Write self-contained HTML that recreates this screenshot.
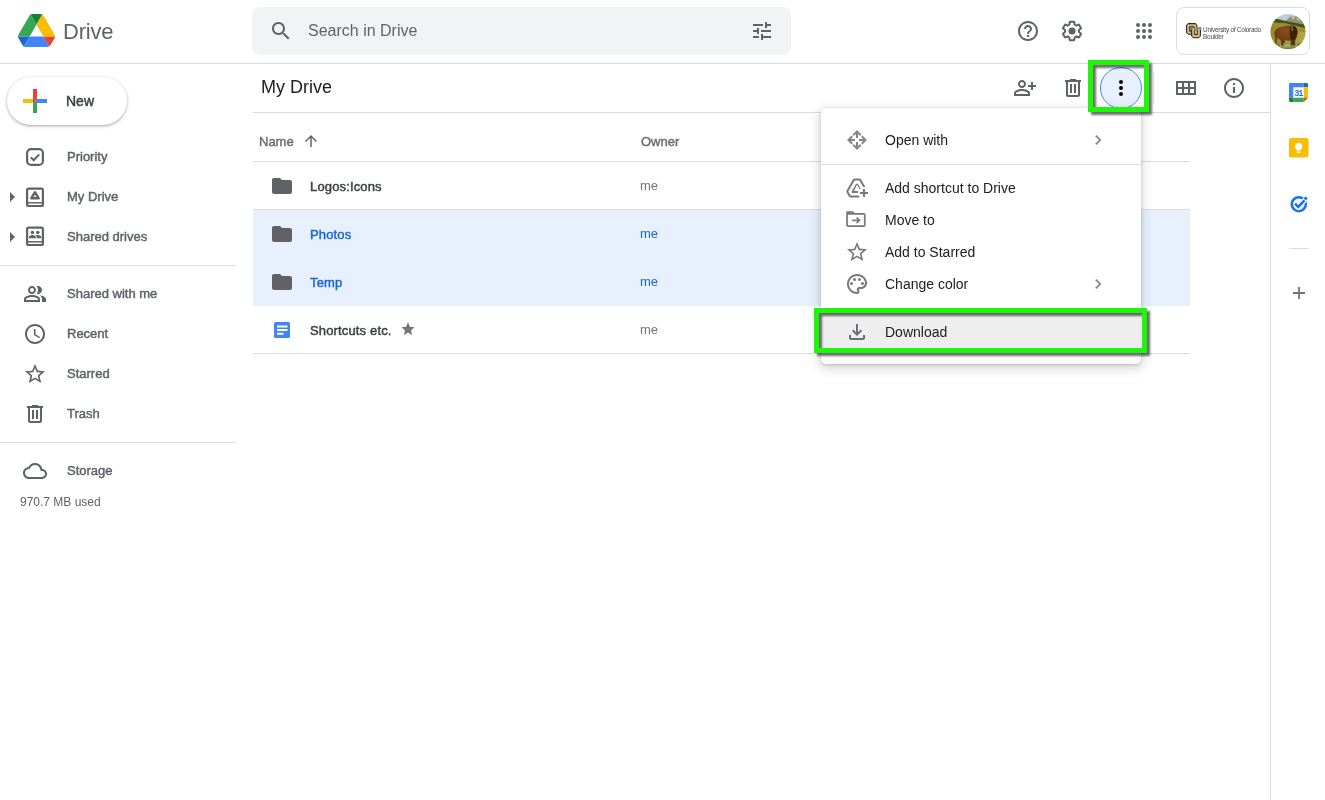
<!DOCTYPE html>
<html lang="en">
<head>
<meta charset="utf-8">
<title>My Drive - Google Drive</title>
<style>
*{box-sizing:border-box;margin:0;padding:0}
html,body{width:1325px;height:800px;overflow:hidden;background:#fff}
body{position:relative;font-family:"Liberation Sans",Arial,sans-serif;color:#202124;-webkit-font-smoothing:antialiased}
#wrap{position:absolute;left:0;top:0;width:1325px;height:800px;will-change:transform}
.abs{position:absolute}
svg{display:block;overflow:visible}
.t{position:absolute;white-space:nowrap;line-height:1}
/* header */
#hdr-line{left:0;top:63px;width:1325px;height:1px;background:#dadce0}
#logo{left:17.500px;top:14px}
#drive-word{left:63px;top:21px;font-size:22px;color:#5f6368;letter-spacing:-0.2px}
#search{left:252px;top:7px;width:539px;height:48px;background:#f1f3f4;border-radius:8px}
#search-text{left:308px;top:23px;font-size:16px;color:#5f6368}
#acct{left:1176px;top:7px;width:134px;height:48px;border:1px solid #dadce0;border-radius:8px;background:#fff}
/* sidebar */
#newbtn{left:7px;top:77px;width:120px;height:48px;border-radius:24px;background:#fff;box-shadow:0 1px 2px 0 rgba(60,64,67,.30),0 1px 3px 1px rgba(60,64,67,.15)}
#new-text{left:66px;top:94px;font-size:14px;-webkit-text-stroke:0.45px;color:#3c4043}
.nav{position:absolute;left:67px;font-size:13px;-webkit-text-stroke:0.45px #5f6368;color:#5f6368;white-space:nowrap;line-height:1}
.navi{position:absolute;left:23px;width:24px;height:24px}
.tri{position:absolute;left:10px;width:0;height:0;border-left:5px solid #5f6368;border-top:5px solid transparent;border-bottom:5px solid transparent}
.sdiv{position:absolute;left:0;width:236px;height:1px;background:#dadce0}
/* main */
.hline{position:absolute;height:1px;background:#dadce0}
.row{position:absolute;left:253px;width:937px;height:48px}
.row.sel{background:#e8f0fe}
.fname{position:absolute;left:310px;font-size:13px;letter-spacing:0.15px;-webkit-text-stroke:0.45px;color:#3c4043;white-space:nowrap;line-height:1}
.owner{position:absolute;left:640px;font-size:13px;color:#737373;white-space:nowrap;line-height:1}
.blue{color:#1967d2}
/* menu */
#menu{left:821px;top:108px;width:320px;height:256px;background:#fff;border-radius:5px;box-shadow:0 3px 10px 3px rgba(60,64,67,.17),0 1px 3px 0 rgba(60,64,67,.22)}
.mi{position:absolute;left:885px;font-size:14px;color:#202124;white-space:nowrap;line-height:1}
.mico{position:absolute;left:845px;width:24px;height:24px}
.green{position:absolute;border:5px solid #1ef709;filter:drop-shadow(3px 3px 1.2px rgba(55,50,60,.72))}
</style>
</head>
<body>
<div id="wrap">

<!-- ===== header ===== -->
<div class="abs" id="hdr-line"></div>
<div class="abs" id="logo">
<svg width="37" height="33" viewBox="0 0 87.3 78">
<path d="m6.6 66.85 3.85 6.65c.8 1.4 1.95 2.5 3.3 3.3l13.75-23.8h-27.5c0 1.55.4 3.1 1.2 4.500z" fill="#1967d2"/>
<path d="m43.650 25-13.750-23.800c-1.350.800-2.500 1.900-3.300 3.300l-25.400 44a9.060 9.060 0 0 0 -1.200 4.500h27.500z" fill="#34a853"/>
<path d="m73.550 76.800c1.350-.800 2.500-1.900 3.300-3.300l1.600-2.750 7.650-13.250c.800-1.400 1.200-2.950 1.200-4.500h-27.502l5.852 11.500z" fill="#ea4335"/>
<path d="m43.650 25 13.750-23.800c-1.350-.800-2.900-1.200-4.500-1.200h-18.500c-1.600 0-3.150.450-4.500 1.200z" fill="#188038"/>
<path d="m59.800 53h-32.300l-13.750 23.800c1.350.800 2.900 1.200 4.500 1.200h50.800c1.600 0 3.150-.450 4.500-1.200z" fill="#4285f4"/>
<path d="m73.400 26.500-12.700-22c-.800-1.400-1.950-2.500-3.300-3.300l-13.750 23.800 16.150 28h27.450c0-1.550-.400-3.100-1.200-4.500z" fill="#fbbc04"/>
</svg>
</div>
<div class="t" id="drive-word">Drive</div>

<div class="abs" id="search"></div>
<div class="t" id="search-text">Search in Drive</div>


<!-- search icons -->
<svg class="abs" style="left:269px;top:19px" width="24" height="24" viewBox="0 0 24 24" fill="#5f6368"><path d="M15.5 14h-.79l-.28-.27C15.410 12.590 16 11.110 16 9.500 16 5.910 13.090 3 9.500 3S3 5.910 3 9.500 5.910 16 9.500 16c1.610 0 3.090-.59 4.230-1.570l.27.28v.79l5 4.990L20.490 19l-4.990-5zm-6 0C7.010 14 5 11.990 5 9.500S7.010 5 9.500 5 14 7.010 14 9.500 11.990 14 9.500 14z"/></svg>
<svg class="abs" style="left:750px;top:19px" width="24" height="24" viewBox="0 0 24 24" fill="#5f6368"><path d="M3 17v2h6v-2H3zM3 5v2h10V5H3zm10 16v-2h8v-2h-8v-2h-2v6h2zM7 9v2H3v2h4v2h2V9H7zm14 4v-2H11v2h10zm-6-4h2V7h4V5h-4V3h-2v6z"/></svg>
<!-- help / settings / apps -->
<svg class="abs" style="left:1016px;top:19px" width="24" height="24" viewBox="0 0 24 24" fill="#5f6368"><path d="M11 18h2v-2h-2v2zm1-16C6.480 2 2 6.480 2 12s4.480 10 10 10 10-4.480 10-10S17.520 2 12 2zm0 18c-4.410 0-8-3.590-8-8s3.590-8 8-8 8 3.590 8 8-3.590 8-8 8zm0-14c-2.210 0-4 1.790-4 4h2c0-1.100.9-2 2-2s2 .9 2 2c0 2-3 1.750-3 5h2c0-2.250 3-2.500 3-5 0-2.210-1.790-4-4-4z"/></svg>
<svg class="abs" style="left:1060px;top:19px" width="24" height="24" viewBox="0 0 24 24" fill="#5f6368"><path d="M13.850 22.250h-3.700c-.74 0-1.360-.54-1.450-1.270l-.27-1.890c-.27-.14-.53-.29-.79-.46l-1.800.72c-.7.260-1.470-.03-1.810-.65L2.200 15.530c-.35-.66-.2-1.440.36-1.880l1.530-1.190c-.01-.15-.02-.3-.02-.46 0-.15.010-.31.020-.46l-1.520-1.190c-.59-.45-.74-1.260-.37-1.880l1.850-3.190c.34-.62 1.110-.9 1.790-.63l1.810.73c.26-.17.52-.32.78-.46l.27-1.910c.09-.7.710-1.250 1.440-1.250h3.700c.74 0 1.360.54 1.450 1.270l.27 1.890c.27.140.53.290.79.460l1.800-.72c.71-.26 1.480.03 1.820.65l1.840 3.180c.36.660.2 1.440-.36 1.880l-1.520 1.190c.01.150.02.300.02.460s-.01.310-.02.460l1.520 1.190c.56.450.72 1.230.37 1.860l-1.860 3.220c-.34.620-1.110.9-1.800.63l-1.800-.72c-.26.170-.52.320-.78.460l-.27 1.910c-.1.680-.72 1.220-1.460 1.220zm-3.230-2h2.760l.37-2.550.53-.22c.44-.18.880-.44 1.340-.78l.45-.34 2.380.96 1.380-2.400-2.030-1.580.07-.56c.03-.26.060-.51.060-.78s-.03-.53-.06-.78l-.07-.56 2.030-1.580-1.390-2.400-2.390.96-.45-.35c-.42-.32-.87-.58-1.330-.77l-.52-.22-.37-2.550h-2.760l-.37 2.550-.53.210c-.44.190-.88.440-1.340.79l-.45.330-2.380-.95-1.390 2.390 2.030 1.580-.07.560a7 7 0 0 0-.06.790c0 .26.020.53.060.78l.07.56-2.030 1.580 1.380 2.400 2.390-.96.450.35c.43.330.86.580 1.330.77l.53.220.38 2.550z"/><circle cx="12" cy="12" r="3.500"/></svg>
<svg class="abs" style="left:1132px;top:19px" width="24" height="24" viewBox="0 0 24 24" fill="#5f6368"><circle cx="6" cy="6" r="2"/><circle cx="12" cy="6" r="2"/><circle cx="18" cy="6" r="2"/><circle cx="6" cy="12" r="2"/><circle cx="12" cy="12" r="2"/><circle cx="18" cy="12" r="2"/><circle cx="6" cy="18" r="2"/><circle cx="12" cy="18" r="2"/><circle cx="18" cy="18" r="2"/></svg>
<div class="abs" id="acct"></div>
<!-- CU logo -->
<svg class="abs" style="left:1184.500px;top:21.500px" width="17" height="17" viewBox="0 0 32 32" fill="none" stroke-linejoin="bevel">
<path d="M19.500 10V6H6v14h8" stroke="#2a2723" stroke-width="8"/>
<path d="M19.500 10V6H6v14h8" stroke="#cfb87c" stroke-width="4"/>
<path d="M10.500 13.500h9M21.500 13.500h9" stroke="#2a2723" stroke-width="6"/>
<path d="M15.500 12v14.500H26V12" stroke="#2a2723" stroke-width="8"/>
<path d="M15.500 12v14.500H26V12" stroke="#cfb87c" stroke-width="4"/>
<path d="M11.500 13.500h8M22 13.500h8" stroke="#cfb87c" stroke-width="2.500"/>
</svg>
<div class="t" style="left:1203px;top:27px;font-size:6.400px;line-height:6.500px;color:#4a4a4a;white-space:normal;width:70px;letter-spacing:-0.22px">University of Colorado<br>Boulder</div>
<!-- avatar -->
<svg class="abs" style="left:1270px;top:14px" width="36" height="36" viewBox="0 0 36 36">
<defs><clipPath id="avc"><circle cx="18" cy="17.700" r="17.600"/></clipPath>
<filter id="avb" x="-10%" y="-10%" width="120%" height="120%"><feGaussianBlur stdDeviation="0.55"/></filter>
<radialGradient id="buf" cx="0.5" cy="0.3" r="0.75"><stop offset="0" stop-color="#8d4f1a"/><stop offset="0.6" stop-color="#6e3f17"/><stop offset="1" stop-color="#4e2d12"/></radialGradient>
<linearGradient id="fld" x1="0" y1="0" x2="1" y2="0.3"><stop offset="0" stop-color="#8a7a24"/><stop offset="0.5" stop-color="#a8952f"/><stop offset="1" stop-color="#b3a646"/></linearGradient>
</defs>
<g clip-path="url(#avc)"><g filter="url(#avb)">
<rect x="-2" y="-2" width="40" height="40" fill="url(#fld)"/>
<path d="M-2 -2h40v9H-2z" fill="#c3cbdb"/>
<path d="M16 7l3-3.500 3-1.500 3 .500 3-1 4 3 6 6v4L14 9z" fill="#8f9270"/>
<path d="M21 3l2.500-1 1.500 1.500-2.500 2zM26 3.500l3 1.500 1 2-2.500-1z" fill="#c9c3a8"/>
<path d="M-2 4.500l10 .500 10 2.500 18 3.500v3.500L16 9.500-2 8z" fill="#3f5220"/>
<path d="M-2 8l18 1.500 20 5v4L-2 13z" fill="#9a8c2c"/>
<path d="M-2 29c6-2 12-1 18 0s12-1.500 22-1V38H-2z" fill="#7f8a3c"/>
<path d="M4.500 20c-.2-3.500 2.500-6 6.500-7 3.500-.9 6-1 9-1.500 2.500-.4 5 .5 6.500 2.500 1.500 2.200 1.300 5 .5 7.500-.6 2-1.500 3.500-1.800 5.500l-.7 4h-3.500l-.5-4.500c-2 .4-4 .2-5.500-.3l-.8 4.500h-3l-.7-5c-1.200-.300-2.500-1-3.500-2l-.5 5.500H5.500l-.3-6c-.5-1-.6-2-.7-3.200z" fill="url(#buf)"/>
<path d="M20.500 12.500c1.500-1 3.500-1 5 .3 1.800 1.600 2.300 4.500 1.700 7.500-.5 2.600-1.700 5.500-3.500 6.200-2 .7-3.300-1.500-3.800-4.500-.5-3-.3-7 .6-9.500z" fill="#3a2311"/>
<path d="M27.200 14.200c.8.200 1.300 1 1 2M21.200 14c.3-.8 1-1.200 1.800-1" stroke="#b9a66a" stroke-width=".9" fill="none"/>
<circle cx="22.300" cy="15.500" r=".9" fill="#a89a3a"/>
<ellipse cx="17.500" cy="31.500" rx="3" ry="1.800" fill="#9dab74"/>
<path d="M10 28l1 6M14 29l.5 5M27 27l-1 7M30 26l.5 6" stroke="#a5a555" stroke-width="1"/>
</g></g>
</svg>

<!-- ===== sidebar ===== -->
<div class="abs" id="newbtn"></div>
<div class="t" id="new-text">New</div>


<!-- new plus -->
<svg class="abs" style="left:17px;top:83px" width="36" height="36" viewBox="0 0 36 36"><path fill="#34A853" d="M16 16v14h4V20z"/><path fill="#4285F4" d="M30 16H20l-4 4h14z"/><path fill="#FBBC05" d="M6 16v4h10l4-4z"/><path fill="#EA4335" d="M20 16V6h-4v14z"/></svg>
<!-- nav icons -->
<svg class="navi" style="top:145px" viewBox="0 0 24 24" fill="none" stroke="#5f6368" stroke-width="2.200"><rect x="4.100" y="4.100" width="15.800" height="15.800" rx="4"/><path d="M7.800 12.300l2.900 2.900 5.500-5.800" stroke-width="2"/></svg>
<div class="tri" style="top:192px"></div>
<svg class="navi" style="top:184.500px" viewBox="0 0 24 24" fill="none" stroke="#5f6368" stroke-width="2.200"><rect x="4.100" y="3.600" width="15.800" height="17.400" rx="1.500"/><path d="M4 17.800h16" stroke-width="1.500"/><path d="M12 7.200l3.700 6.100H8.300z" stroke-width="2.400" stroke-linejoin="round"/></svg>
<div class="tri" style="top:232px"></div>
<svg class="navi" style="top:224.400px" viewBox="0 0 24 24" fill="none" stroke="#5f6368" stroke-width="2.200"><rect x="4.100" y="3.600" width="15.800" height="17.400" rx="1.500"/><path d="M4 17.800h16" stroke-width="1.500"/><g fill="#5f6368" stroke="none" transform="translate(12 11) scale(1.180) translate(-12 -11.200)"><circle cx="9.800" cy="9" r="1.500"/><circle cx="14.400" cy="9" r="1.500"/><path d="M6.800 14v-.8c0-1.300 2-1.900 3-1.900s3 .6 3 1.900v.8zM13.500 14v-.8c0-.7-.4-1.300-1-1.700.7-.2 1.400-.2 1.900-.2 1 0 3 .6 3 1.900v.8z"/></g></svg>
<svg class="navi" style="top:282px" viewBox="0 0 24 24" fill="#5f6368"><path d="M15 8c0-1.420-.5-2.730-1.330-3.760.42-.14.86-.24 1.330-.24 2.210 0 4 1.790 4 4s-1.790 4-4 4c-.43 0-.84-.09-1.230-.21-.03-.01-.06-.02-.1-.03A5.980 5.980 0 0 0 15 8zm1.660 5.130C18.030 14.060 19 15.320 19 17v3h4v-3c0-2.180-3.580-3.470-6.340-3.870zM9 6c-1.100 0-2 .9-2 2s.9 2 2 2 2-.9 2-2-.9-2-2-2m0 9c-2.700 0-5.800 1.290-6 2.010V18h12v-1c-.2-.71-3.300-2-6-2M9 4c2.210 0 4 1.790 4 4s-1.790 4-4 4-4-1.790-4-4 1.790-4 4-4zm0 9c2.670 0 8 1.340 8 4v3H1v-3c0-2.660 5.330-4 8-4z"/></svg>
<svg class="navi" style="top:322px" viewBox="0 0 24 24" fill="#5f6368"><path d="M11.990 2C6.470 2 2 6.480 2 12s4.470 10 9.990 10C17.520 22 22 17.520 22 12S17.520 2 11.990 2zM12 20c-4.420 0-8-3.580-8-8s3.580-8 8-8 8 3.580 8 8-3.580 8-8 8zm.5-13H11v6l5.250 3.150.75-1.230-4.500-2.670z"/></svg>
<svg class="navi" style="top:362px" viewBox="0 0 24 24" fill="#5f6368"><path d="M22 9.240l-7.190-.62L12 2 9.190 8.630 2 9.240l5.460 4.730L5.820 21 12 17.270 18.180 21l-1.630-7.030L22 9.240zM12 15.400l-3.760 2.270 1-4.280-3.320-2.880 4.380-.38L12 6.100l1.710 4.040 4.380.38-3.320 2.880 1 4.280L12 15.400z"/></svg>
<svg class="navi" style="top:402px" viewBox="0 0 24 24" fill="#5f6368"><path d="M15 4V3H9v1H4v2h1v13c0 1.100.9 2 2 2h10c1.100 0 2-.9 2-2V6h1V4h-5zm2 15H7V6h10v13zM9 8h2v9H9zm4 0h2v9h-2z"/></svg>
<svg class="navi" style="top:459px" viewBox="0 0 24 24" fill="#5f6368"><path d="M19.350 10.040C18.670 6.590 15.640 4 12 4 9.110 4 6.600 5.640 5.350 8.040 2.340 8.360 0 10.910 0 14c0 3.310 2.690 6 6 6h13c2.760 0 5-2.240 5-5 0-2.640-2.050-4.780-4.650-4.960zM19 18H6c-2.210 0-4-1.790-4-4 0-2.050 1.530-3.760 3.560-3.970l1.070-.11.5-.95C8.080 7.140 9.940 6 12 6c2.620 0 4.880 1.860 5.390 4.430l.3 1.500 1.530.11c1.560.1 2.780 1.410 2.780 2.960 0 1.650-1.350 3-3 3z"/></svg>
<div class="nav" style="top:150px">Priority</div>
<div class="nav" style="top:190px">My Drive</div>
<div class="nav" style="top:230px">Shared drives</div>
<div class="sdiv" style="top:265px"></div>
<div class="nav" style="top:287px">Shared with me</div>
<div class="nav" style="top:327px">Recent</div>
<div class="nav" style="top:367px">Starred</div>
<div class="nav" style="top:407px">Trash</div>
<div class="sdiv" style="top:442px"></div>
<div class="nav" style="top:464px">Storage</div>
<div class="t" style="left:20px;top:496px;font-size:12px;color:#5f6368">970.7 MB used</div>

<!-- ===== main ===== -->
<div class="t" style="left:261px;top:78px;font-size:18px;color:#202124">My Drive</div>
<div class="hline" style="left:253px;top:112px;width:1017px"></div>
<div class="t" style="left:259px;top:135px;font-size:13px;-webkit-text-stroke:0.45px;color:#6e6e6e">Name</div>
<div class="t" style="left:641px;top:135px;font-size:13px;-webkit-text-stroke:0.45px;color:#6e6e6e">Owner</div>
<div class="hline" style="left:253px;top:161px;width:937px"></div>

<div class="row" style="top:162px"></div>
<div class="row sel" style="top:210px"></div>
<div class="row sel" style="top:258px"></div>
<div class="row" style="top:306px"></div>
<div class="hline" style="left:253px;top:209px;width:937px"></div>
<div class="hline" style="left:253px;top:353px;width:937px"></div>

<div class="fname" style="top:180px">Logos:Icons</div>
<div class="fname blue" style="top:228px">Photos</div>
<div class="fname blue" style="top:276px">Temp</div>
<div class="fname" style="top:324px">Shortcuts etc.</div>
<div class="owner" style="top:179px">me</div>
<div class="owner blue" style="top:227px">me</div>
<div class="owner blue" style="top:275px">me</div>
<div class="owner" style="top:323px">me</div>


<!-- toolbar icons -->
<svg class="abs" style="left:1013px;top:76px" width="24" height="24" viewBox="0 0 24 24" fill="#5f6368"><path d="M9 12c2.210 0 4-1.790 4-4s-1.790-4-4-4-4 1.790-4 4 1.790 4 4 4zm0-6c1.100 0 2 .9 2 2s-.9 2-2 2-2-.9-2-2 .9-2 2-2zm0 7c-2.670 0-8 1.340-8 4v3h16v-3c0-2.660-5.330-4-8-4zm6 5H3v-.99C3.200 16.290 6.300 15 9 15s5.800 1.290 6 2v1zm3-4v-3h-3V9h3V6h2v3h3v2h-3v3h-2z"/></svg>
<svg class="abs" style="left:1061px;top:76px" width="24" height="24" viewBox="0 0 24 24" fill="#5f6368"><path d="M15 4V3H9v1H4v2h1v13c0 1.100.9 2 2 2h10c1.100 0 2-.9 2-2V6h1V4h-5zm2 15H7V6h10v13zM9 8h2v9H9zm4 0h2v9h-2z"/></svg>
<div class="abs" style="left:1100px;top:67px;width:42px;height:42px;border-radius:50%;background:#e8f0fe;border:1px solid #4285f4"></div>
<svg class="abs" style="left:1109px;top:76px" width="24" height="24" viewBox="0 0 24 24" fill="#0b0b0b"><circle cx="12" cy="6" r="2"/><circle cx="12" cy="12" r="2"/><circle cx="12" cy="18" r="2"/></svg>
<svg class="abs" style="left:1174px;top:76px" width="24" height="24" viewBox="0 0 24 24" fill="#5f6368"><path fill-rule="evenodd" d="M2 5h20v14H2zM4 7v4h4V7zM10 7v4h4V7zM16 7v4h4V7zM4 13v4h4v-4zM10 13v4h4v-4zM16 13v4h4v-4z"/></svg>
<div class="abs" style="left:1153px;top:72px;width:1px;height:32px;background:#e6e6e6"></div>
<svg class="abs" style="left:1222px;top:76px" width="24" height="24" viewBox="0 0 24 24" fill="#5f6368"><path d="M11 7h2v2h-2zm0 4h2v6h-2zm1-9C6.480 2 2 6.480 2 12s4.480 10 10 10 10-4.480 10-10S17.520 2 12 2zm0 18c-4.410 0-8-3.590-8-8s3.590-8 8-8 8 3.590 8 8-3.590 8-8 8z"/></svg>
<!-- sort arrow -->
<svg class="abs" style="left:302px;top:132px" width="18" height="18" viewBox="0 0 24 24" fill="#5f6368"><path d="M4 12l1.410 1.410L11 7.830V20h2V7.830l5.580 5.590L20 12l-8-8-8 8z"/></svg>
<!-- file icons -->
<svg class="abs" style="left:270px;top:174px" width="24" height="24" viewBox="0 0 24 24" fill="#5f6368"><path d="M10 4H4c-1.100 0-1.990.9-1.990 2L2 18c0 1.100.9 2 2 2h16c1.100 0 2-.9 2-2V8c0-1.100-.9-2-2-2h-8l-2-2z"/></svg>
<svg class="abs" style="left:270px;top:222px" width="24" height="24" viewBox="0 0 24 24" fill="#5f6368"><path d="M10 4H4c-1.100 0-1.990.9-1.990 2L2 18c0 1.100.9 2 2 2h16c1.100 0 2-.9 2-2V8c0-1.100-.9-2-2-2h-8l-2-2z"/></svg>
<svg class="abs" style="left:270px;top:270px" width="24" height="24" viewBox="0 0 24 24" fill="#5f6368"><path d="M10 4H4c-1.100 0-1.990.9-1.990 2L2 18c0 1.100.9 2 2 2h16c1.100 0 2-.9 2-2V8c0-1.100-.9-2-2-2h-8l-2-2z"/></svg>
<svg class="abs" style="left:274px;top:322px" width="16" height="16" viewBox="0 0 16 16"><rect width="16" height="16" rx="1.600" fill="#4285f4"/><path d="M3 3.500h10.500v2H3zM3 7.100h10.500v2H3zM3 10.700h6.500v2H3z" fill="#fff"/></svg>
<svg class="abs" style="left:400px;top:321px" width="16" height="16" viewBox="0 0 24 24" fill="#757575"><path d="M12 17.270L18.180 21l-1.640-7.030L22 9.240l-7.190-.61L12 2 9.190 8.630 2 9.240l5.460 4.730L5.820 21z"/></svg>
<!-- right rail -->
<div class="abs" style="left:1270px;top:64px;width:1px;height:736px;background:#dadce0"></div>
<div class="abs" style="left:1289px;top:248px;width:20px;height:1px;background:#dadce0"></div>


<!-- calendar -->
<svg class="abs" style="left:1289.300px;top:82.500px" width="19" height="19" viewBox="0 0 20 20">
<rect x="0" y="0" width="20" height="20" rx="1.500" fill="#fff"/>
<path d="M1.500 0h14v4.500H4.500v11H0V1.500A1.500 1.500 0 0 1 1.500 0z" fill="#4285f4"/>
<path d="M15.500 0h3A1.500 1.500 0 0 1 20 1.500v3h-4.500z" fill="#1967d2"/>
<rect x="15.500" y="4.500" width="4.500" height="11" fill="#fbbc04"/>
<rect x="4.500" y="15.500" width="11" height="4.500" fill="#34a853"/>
<path d="M0 15.500h4.500V20h-3A1.500 1.500 0 0 1 0 18.500z" fill="#188038"/>
<path d="M15.500 15.500H20L15.500 20z" fill="#ea4335"/>
<text x="10" y="13.400" font-family="Liberation Sans, sans-serif" font-weight="bold" font-size="9" text-anchor="middle" fill="#1a73e8" letter-spacing="-0.7">31</text>
</svg>
<!-- keep -->
<svg class="abs" style="left:1289px;top:138px" width="20" height="20" viewBox="0 0 20 20">
<rect x="0" y="0" width="19.500" height="19.500" rx="2" fill="#fbbc04"/>
<circle cx="9.700" cy="8.300" r="3.600" fill="#fff"/>
<rect x="7.700" y="10.500" width="4" height="2" fill="#fff"/>
<rect x="7.700" y="13.600" width="4" height="1.300" fill="#fff"/>
</svg>
<!-- tasks -->
<svg class="abs" style="left:1289px;top:194px" width="20" height="20" viewBox="0 0 20 20" fill="none">
<circle cx="9.800" cy="10.200" r="7" stroke="#1a73e8" stroke-width="2.600"/>
<path d="M6.300 10l2.900 2.900 7-7.300" stroke="#fff" stroke-width="5" stroke-linecap="butt"/>
<path d="M6 9.700l3.200 3.200 6.300-6.600" stroke="#1a73e8" stroke-width="2.500"/>
<circle cx="16.700" cy="4.300" r="1.600" fill="#1a73e8"/>
</svg>
<!-- rail plus -->
<svg class="abs" style="left:1293px;top:287px" width="12" height="12" viewBox="0 0 12 12"><path d="M6 0v12M0 6h12" stroke="#70757a" stroke-width="1.800"/></svg>
<!-- ===== menu ===== -->
<div class="abs" id="menu"></div>
<div class="hline" style="left:821px;top:164px;width:320px"></div>
<div class="abs" style="left:819px;top:313px;width:323px;height:35px;background:#eeeeee"></div>

<svg class="abs" style="left:847px;top:130px" width="20" height="20" viewBox="0 0 20 20" fill="none" stroke="#868686" stroke-width="2"><path d="M10 8V1.800M6.300 5.200L10 1.500l3.700 3.700M10 12v6.200M6.300 14.800L10 18.500l3.700-3.700M8 10H1.800M5.200 6.300L1.500 10l3.700 3.700M12 10h6.200M14.800 6.300L18.500 10l-3.700 3.700"/></svg>
<svg class="mico" style="top:175.500px" viewBox="0 0 24 24" fill="#787878"><path d="M20 21v-3h3v-2h-3v-3h-2v3h-3v2h3v3h2zm-4.970.5H5.660c-.72 0-1.380-.38-1.730-1L1.570 16.400c-.36-.62-.35-1.380.01-2L7.920 3.490c.36-.61 1.020-.99 1.730-.99h4.700c.71 0 1.370.38 1.730.99l4.480 7.710c-.5-.13-1.020-.2-1.560-.2-.28 0-.56.020-.83.060L14.350 4.500h-4.700L3.310 15.410l2.350 4.090h7.890c.35.800.86 1.470 1.480 2zM13.340 15c-.22.630-.34 1.300-.34 2H7.250l-.73-1.270 4.580-7.980h1.800l2.740 4.700c-.3.3-.58.640-.82 1l-2.820-4.840L8.980 15h4.360z"/></svg>
<svg class="mico" style="top:208px" viewBox="0 0 24 24" fill="none" stroke="#787878" stroke-width="1.700"><path d="M1.200 6V4.200a1 1 0 0 1 1-1h5.600a1 1 0 0 1 .8.400L10.200 6z" fill="#787878" stroke="none"/><rect x="2.050" y="5.950" width="17.700" height="12.100" rx="1"/><path d="M7.200 12.300h7M11.600 9.500l2.900 2.800-2.900 2.800"/></svg>
<svg class="mico" style="top:240px" viewBox="0 0 24 24" fill="#787878"><path d="M22 9.240l-7.190-.62L12 2 9.190 8.630 2 9.240l5.460 4.730L5.820 21 12 17.270 18.180 21l-1.630-7.030L22 9.240zM12 15.400l-3.760 2.270 1-4.280-3.320-2.880 4.380-.38L12 6.100l1.710 4.040 4.380.38-3.320 2.880 1 4.280L12 15.400z"/></svg>
<svg class="mico" style="top:272px" viewBox="0 0 24 24" fill="#787878"><path d="M12 22C6.490 22 2 17.510 2 12S6.490 2 12 2s10 4.040 10 9c0 3.310-2.690 6-6 6h-1.770c-.28 0-.5.220-.5.500 0 .12.050.23.130.33.410.47.640 1.060.640 1.670A2.500 2.500 0 0 1 12 22zm0-18c-4.410 0-8 3.590-8 8s3.590 8 8 8c.28 0 .5-.22.5-.5a.54.54 0 0 0-.14-.35c-.41-.46-.63-1.050-.63-1.650a2.500 2.500 0 0 1 2.500-2.500H16c2.210 0 4-1.790 4-4 0-3.860-3.590-7-8-7z"/><circle cx="6.500" cy="11.500" r="1.500"/><circle cx="9.500" cy="7.500" r="1.500"/><circle cx="14.500" cy="7.500" r="1.500"/><circle cx="17.500" cy="11.500" r="1.500"/></svg>
<svg class="mico" style="top:320px" viewBox="0 0 24 24" fill="#6b6f73"><path d="M18 15v3H6v-3H4v3c0 1.100.9 2 2 2h12c1.100 0 2-.9 2-2v-3h-2zm-1-4l-1.410-1.410L13 12.170V4h-2v8.170L8.410 9.590 7 11l5 5 5-5z"/></svg>
<svg class="abs" style="left:1088px;top:130px" width="20" height="20" viewBox="0 0 24 24" fill="#80868b"><path d="M10 6L8.590 7.410 13.170 12l-4.580 4.590L10 18l6-6z"/></svg>
<svg class="abs" style="left:1088px;top:274px" width="20" height="20" viewBox="0 0 24 24" fill="#80868b"><path d="M10 6L8.590 7.410 13.170 12l-4.580 4.590L10 18l6-6z"/></svg>
<div class="mi" style="top:133px">Open with</div>
<div class="mi" style="top:181px">Add shortcut to Drive</div>
<div class="mi" style="top:213px">Move to</div>
<div class="mi" style="top:245px">Add to Starred</div>
<div class="mi" style="top:277px">Change color</div>
<div class="mi" style="top:325px">Download</div>

<div class="green" style="left:1088px;top:60px;width:61px;height:52px"></div>
<div class="green" style="left:814px;top:308px;width:333px;height:45px"></div>

</div>
</body>
</html>
